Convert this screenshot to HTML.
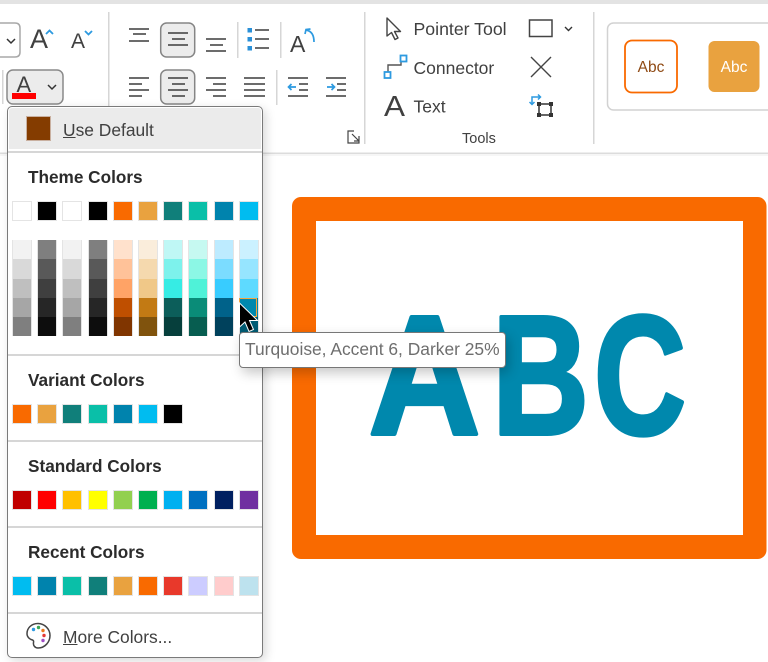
<!DOCTYPE html>
<html lang="en"><head><meta charset="utf-8"><title>Font Color</title>
<style>
html,body{margin:0;padding:0;background:#fff}
#p{position:relative;width:768px;height:662px;overflow:hidden;background:#fff;font-family:"Liberation Sans",sans-serif}
svg{position:absolute;left:0;top:0}
.g{position:absolute;left:13px;display:grid;grid-template-columns:repeat(10,18px);column-gap:7.2px}
.g i{display:block;height:18px;box-shadow:0 0 0 1px #e4e4e4}
.g.s{row-gap:0}
.g.s i{height:19.3px;box-shadow:1px 0 0 #e4e4e4,-1px 0 0 #e4e4e4}
#menu{position:absolute;left:7px;top:106px;width:254px;height:550px;border:1.5px solid #7a7a7a;border-radius:5px;background:#fff;box-shadow:3px 3px 10px rgba(0,0,0,.15)}
.t{position:absolute;white-space:nowrap;color:#2b2b2b}
.h{font-weight:700;font-size:17.2px;left:28px}
.n{font-size:17.4px;left:63px;color:#404040}
.sep{position:absolute;left:8px;width:254px;height:1.5px;background:#d6d6d6}
#tip{position:absolute;left:239px;top:332px;width:267px;height:36px;box-sizing:border-box;border:1.5px solid #777;border-radius:4px;background:#fff;box-shadow:3px 5px 12px rgba(0,0,0,.22);font-size:17.4px;color:#6e6e6e;line-height:33px;padding-left:5px;white-space:nowrap}
</style></head><body><div id="p">
<svg width="768" height="662" viewBox="0 0 768 662" font-family="Liberation Sans, sans-serif">
<rect width="768" height="4" fill="#e3e3e3"/>
<rect y="152.500" width="768" height="1.500" fill="#dcdcdc"/>
<rect y="154" width="768" height="2" fill="#f6f6f6"/>
<!-- separators -->
<g fill="#d6d6d6">
<rect x="108" y="12" width="1.500" height="132"/><rect x="364" y="12" width="1.500" height="132"/><rect x="593" y="12" width="1.500" height="132"/>
<rect x="2" y="70" width="1.500" height="34"/><rect x="237" y="22" width="1.500" height="36"/><rect x="280" y="22" width="1.500" height="36"/><rect x="276" y="70" width="1.500" height="35"/>
</g>
<!-- font size combo / grow shrink -->
<path d="M-5 23H15Q20 23 20 28V52Q20 57 15 57H-5" fill="#fff" stroke="#a8a8a8" stroke-width="1.500"/>
<path d="M7 39l4 4 4-4" fill="none" stroke="#333" stroke-width="1.500"/>
<text x="30" y="48" font-size="27" fill="#404040">A</text>
<path d="M46 34l3.500-3.500 3.500 3.500" fill="none" stroke="#2d9ae0" stroke-width="1.800"/>
<text x="71" y="48" font-size="21" fill="#404040">A</text>
<path d="M85 31l3.500 3.500 3.500-3.500" fill="none" stroke="#2d9ae0" stroke-width="1.800"/>
<!-- font color button -->
<rect x="7" y="70" width="56" height="34" rx="6" fill="#ececec" stroke="#8a8a8a" stroke-width="1.500"/>
<text x="16.500" y="92" font-size="22" fill="#404040">A</text>
<rect x="12" y="93" width="24" height="6" fill="#f00"/>
<path d="M48 85l4 4 4-4" fill="none" stroke="#333" stroke-width="1.500"/>
<!-- align buttons -->
<rect x="160.700" y="23" width="34" height="34" rx="6" fill="#ececec" stroke="#858585" stroke-width="1.500"/>
<rect x="160.700" y="70" width="34" height="34" rx="6" fill="#ececec" stroke="#858585" stroke-width="1.500"/>
<g stroke="#3c3c3c" stroke-width="1.500" fill="none">
<path d="M129 29h20M133 34h13M129 41h20"/>
<path d="M168 33h20M172 39h13M168 45h20"/>
<path d="M206 39h20M210 45h13M206 51h20"/>
<path d="M129 78h20M129 84h13M129 90h20M129 96h13"/>
<path d="M168 78h20M172 84h13M168 90h20M172 96h13"/>
<path d="M206 78h20M213 84h13M206 90h20M213 96h13"/>
<path d="M244 78h21M244 84h21M244 90h21M244 96h21"/>
<path d="M288 78h20M299 84h9M299 90h9M288 96h20"/>
<path d="M326 78h20M337 84h9M337 90h9M326 96h20"/>
<path d="M255 30h14M255 39h14M255 48h14"/>
</g>
<g fill="#2a90d8">
<rect x="247.500" y="28" width="4.500" height="4.500"/><rect x="247.500" y="37" width="4.500" height="4.500"/><rect x="247.500" y="46" width="4.500" height="4.500"/>
</g>
<g fill="none" stroke="#2d9ae0" stroke-width="1.700">
<path d="M296 87h-7M291.500 84l-3 3 3 3"/><path d="M327 87h7M331.500 84l3 3-3 3"/>
<path d="M314 42c0-6-2-11-8-12M305 34l1-4.500 4.500-.5"/>
</g>
<text x="290" y="52" font-size="23" fill="#404040">A</text>
<!-- dialog launcher -->
<path d="M354 131h-6v12h11v-6M352 134l7 7M359 136v5h-5" fill="none" stroke="#444" stroke-width="1.200"/>
<!-- tools -->
<path d="M387 18v18l4.500-3.500 3.500 7 3-1.500-3.500-6.500h6z" fill="#fff" stroke="#444" stroke-width="1.400" stroke-linejoin="round"/>
<text x="413.500" y="35" font-size="17.700" fill="#404040">Pointer Tool</text>
<path d="M388 72v-7h13v-8" fill="none" stroke="#555" stroke-width="1.400"/>
<rect x="384.500" y="72" width="6" height="6" fill="#fff" stroke="#2d9ae0" stroke-width="1.800"/>
<rect x="400.500" y="55.500" width="6" height="6" fill="#fff" stroke="#2d9ae0" stroke-width="1.800"/>
<text x="413.500" y="74" font-size="17.500" fill="#404040">Connector</text>
<text x="384" y="116" font-size="29" fill="#404040" textLength="21" lengthAdjust="spacingAndGlyphs">A</text>
<text x="413.500" y="112.500" font-size="17.500" fill="#404040">Text</text>
<text x="462" y="143" font-size="14.500" fill="#404040">Tools</text>
<rect x="529.500" y="20" width="22.500" height="16.500" fill="#fff" stroke="#444" stroke-width="1.500"/>
<path d="M565 27l3.500 3.500 3.500-3.500" fill="none" stroke="#333" stroke-width="1.400"/>
<path d="M531 57l20 20M551 57l-20 20" stroke="#444" stroke-width="1.400"/>
<rect x="539" y="104" width="12" height="11" fill="none" stroke="#333" stroke-width="1.500"/>
<g fill="#333"><rect x="537" y="102" width="4" height="4"/><rect x="549" y="102" width="4" height="4"/><rect x="537" y="113" width="4" height="4"/><rect x="549" y="113" width="4" height="4"/></g>
<path d="M532 104v-7h8M538 94.500l2.500 2.500-2.500 2.500M529.500 102l2.500 2.500 2.500-2.500" fill="none" stroke="#2d9ae0" stroke-width="1.500"/>
<!-- styles gallery -->
<rect x="607.500" y="23" width="170" height="87" rx="6" fill="#fff" stroke="#d2d2d2" stroke-width="1.500"/>
<rect x="625" y="40.500" width="52" height="52" rx="7" fill="#fff" stroke="#f96a00" stroke-width="1.800"/>
<text x="651" y="72" font-size="15.500" fill="#8f4a14" text-anchor="middle">Abc</text>
<rect x="708.500" y="41" width="51" height="51" rx="6" fill="#e9a23f"/>
<text x="734" y="72" font-size="15.500" fill="#fff" text-anchor="middle">Abc</text>
<!-- shape -->
<path fill="#f96a00" fill-rule="evenodd" d="M301 197H757.500a9 9 0 0 1 9 9V550a9 9 0 0 1 -9 9H301a9 9 0 0 1 -9-9V206a9 9 0 0 1 9-9zM316 221V535H743V221z"/>
<g font-weight="700" font-size="170" fill="#0088ad" stroke="#0088ad" stroke-width="4" stroke-linejoin="round">
<text x="368.500" y="434" textLength="112" lengthAdjust="spacingAndGlyphs">A</text>
<text x="492" y="434" textLength="97" lengthAdjust="spacingAndGlyphs">B</text>
<text x="594" y="434" textLength="92" lengthAdjust="spacingAndGlyphs">C</text>
</g>
</svg>

<div id="menu"></div>
<div style="position:absolute;left:9px;top:108px;width:252px;height:41px;background:#ebebeb;border-radius:3px 3px 0 0"></div>
<div class="sep" style="top:151px"></div>
<div style="position:absolute;left:27px;top:117px;width:23px;height:23px;background:#843c00;box-shadow:0 0 0 1px #c9b0a0"></div>
<div class="t n" style="top:120px"><u>U</u>se Default</div>

<div class="t h" style="top:167px">Theme Colors</div>
<div class="g" style="top:202px">
<i style="background:#fff"></i><i style="background:#000"></i><i style="background:#fff"></i><i style="background:#000"></i><i style="background:#f96a00"></i><i style="background:#e9a23f"></i><i style="background:#107f7a"></i><i style="background:#0abfa8"></i><i style="background:#0083ad"></i><i style="background:#00bcf0"></i>
</div>
<div class="g s" style="top:240px">
<i style="background:#f2f2f2"></i><i style="background:#7f7f7f"></i><i style="background:#f2f2f2"></i><i style="background:#7f7f7f"></i><i style="background:#ffe1cc"></i><i style="background:#faeddb"></i><i style="background:#bff7f5"></i><i style="background:#c6f9f1"></i><i style="background:#bdebff"></i><i style="background:#cbf1ff"></i>
<i style="background:#d9d9d9"></i><i style="background:#595959"></i><i style="background:#d9d9d9"></i><i style="background:#595959"></i><i style="background:#ffc299"></i><i style="background:#f5d9ae"></i><i style="background:#7df2ec"></i><i style="background:#8cf7e5"></i><i style="background:#7bdcff"></i><i style="background:#96e5ff"></i>
<i style="background:#bfbfbf"></i><i style="background:#3f3f3f"></i><i style="background:#bfbfbf"></i><i style="background:#3f3f3f"></i><i style="background:#ffa366"></i><i style="background:#f0c888"></i><i style="background:#36ece4"></i><i style="background:#4ff2d8"></i><i style="background:#38ccff"></i><i style="background:#5edaff"></i>
<i style="background:#a6a6a6"></i><i style="background:#262626"></i><i style="background:#a6a6a6"></i><i style="background:#262626"></i><i style="background:#bf4f00"></i><i style="background:#c27a14"></i><i style="background:#0c5e5a"></i><i style="background:#0a8c78"></i><i style="background:#00628a"></i><i style="background:#0088ad"></i>
<i style="background:#7f7f7f"></i><i style="background:#0d0d0d"></i><i style="background:#7f7f7f"></i><i style="background:#0d0d0d"></i><i style="background:#803500"></i><i style="background:#80530d"></i><i style="background:#063f3c"></i><i style="background:#075d50"></i><i style="background:#00415c"></i><i style="background:#005b73"></i>
</div>
<div style="position:absolute;left:239px;top:298px;width:16px;height:17px;border:1.500px solid #f5a33c;background:#0088ad"></div>
<div class="sep" style="top:354px"></div>

<div class="t h" style="top:370px">Variant Colors</div>
<div class="g" style="top:405px">
<i style="background:#f96a00"></i><i style="background:#e9a23f"></i><i style="background:#107f7a"></i><i style="background:#0abfa8"></i><i style="background:#0083ad"></i><i style="background:#00bcf0"></i><i style="background:#000"></i>
</div>
<div class="sep" style="top:440px"></div>

<div class="t h" style="top:456px">Standard Colors</div>
<div class="g" style="top:491px">
<i style="background:#c00000"></i><i style="background:#f00"></i><i style="background:#ffc000"></i><i style="background:#ff0"></i><i style="background:#92d050"></i><i style="background:#00b050"></i><i style="background:#00b0f0"></i><i style="background:#0070c0"></i><i style="background:#002060"></i><i style="background:#7030a0"></i>
</div>
<div class="sep" style="top:526px"></div>

<div class="t h" style="top:542px">Recent Colors</div>
<div class="g" style="top:577px">
<i style="background:#00bcf0"></i><i style="background:#0083ad"></i><i style="background:#0abfa8"></i><i style="background:#107f7a"></i><i style="background:#e9a23f"></i><i style="background:#f96a00"></i><i style="background:#e8392b"></i><i style="background:#ccccff"></i><i style="background:#ffcccc"></i><i style="background:#bde2ee"></i>
</div>
<div class="sep" style="top:612px"></div>

<svg width="768" height="662" viewBox="0 0 768 662" style="pointer-events:none">
<g transform="translate(0,-1.500)">
<path d="M38 625c-7 0-11 5-11 10 0 3 2 5 4 6 2 .5 3 1 2.500 3-.5 3 1.500 5.500 4.500 5.500 7 0 12-6 12-12.500S44.500 625 38 625z" fill="#fff" stroke="#444" stroke-width="1.500"/>
<circle cx="33.500" cy="631" r="1.700" fill="#2d9ae0"/><circle cx="38.500" cy="629" r="1.700" fill="#3aa655"/><circle cx="43" cy="632" r="1.700" fill="#ea7a1e"/><circle cx="44" cy="637" r="1.700" fill="#e53935"/><circle cx="43" cy="642" r="1.700" fill="#a04cc4"/>
</g>
<path d="M239.500 303v24l5.500-5 4 9.500 4.500-2-4-9h8z" fill="#000" stroke="#fff" stroke-width="1"/>
</svg>
<div class="t n" style="top:627px"><u>M</u>ore Colors...</div>

<div id="tip">Turquoise, Accent 6, Darker 25%</div>
</div></body></html>
